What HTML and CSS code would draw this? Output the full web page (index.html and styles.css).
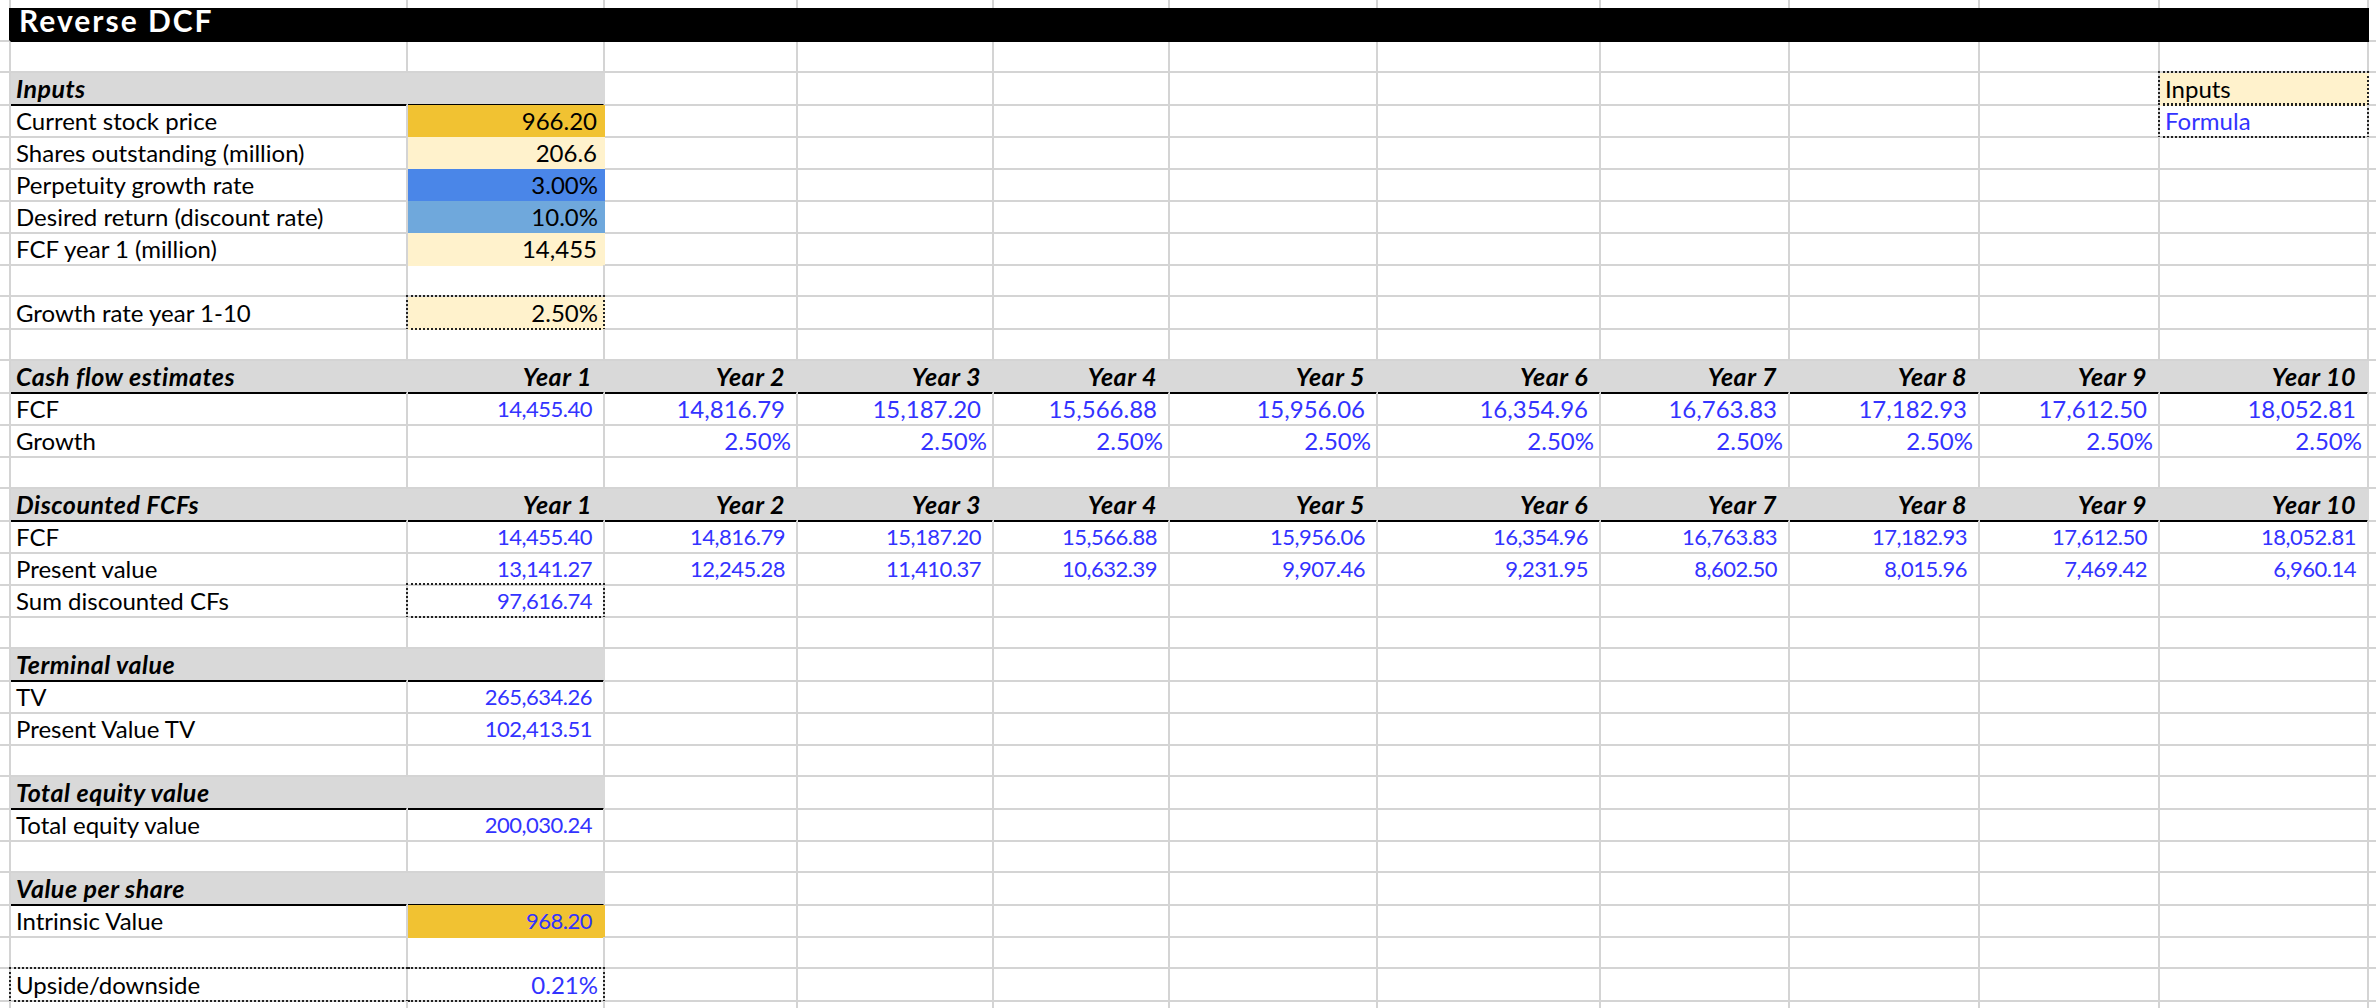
FILE: index.html
```html
<!DOCTYPE html>
<html lang="en">
<head>
<meta charset="utf-8">
<title>Reverse DCF</title>
<link rel="stylesheet" href="styles.css">
</head>
<body>
<div class="sheet">
  <div class="row r0"><span></span><span></span><span></span><span></span><span></span><span></span><span></span><span></span><span></span><span></span><span></span><span></span><span></span></div>
  <div class="row rt"><span class="s"></span><span class="title">Reverse DCF</span><span></span></div>
  <div class="row r2"><span></span><span></span><span></span><span></span><span></span><span></span><span></span><span></span><span></span><span></span><span></span><span></span><span></span></div>

  <div class="row"><span></span><span class="hd hi">Inputs</span><span class="hd"></span><span></span><span></span><span></span><span></span><span></span><span></span><span></span><span></span><span class="ly dot">Inputs</span><span></span></div>
  <div class="row"><span></span><span>Current stock price</span><span class="or v">966.20</span><span></span><span></span><span></span><span></span><span></span><span></span><span></span><span></span><span class="dot b">Formula</span><span></span></div>
  <div class="row"><span></span><span>Shares outstanding (million)</span><span class="ly v">206.6</span><span></span><span></span><span></span><span></span><span></span><span></span><span></span><span></span><span></span><span></span></div>
  <div class="row"><span></span><span>Perpetuity growth rate</span><span class="bl1 p">3.00%</span><span></span><span></span><span></span><span></span><span></span><span></span><span></span><span></span><span></span><span></span></div>
  <div class="row"><span></span><span>Desired return (discount rate)</span><span class="bl2 p">10.0%</span><span></span><span></span><span></span><span></span><span></span><span></span><span></span><span></span><span></span><span></span></div>
  <div class="row"><span></span><span>FCF year 1 (million)</span><span class="ly v">14,455</span><span></span><span></span><span></span><span></span><span></span><span></span><span></span><span></span><span></span><span></span></div>
  <div class="row"><span></span><span></span><span></span><span></span><span></span><span></span><span></span><span></span><span></span><span></span><span></span><span></span><span></span></div>
  <div class="row"><span></span><span>Growth rate year 1-10</span><span class="ly dot p">2.50%</span><span></span><span></span><span></span><span></span><span></span><span></span><span></span><span></span><span></span><span></span></div>
  <div class="row"><span></span><span></span><span></span><span></span><span></span><span></span><span></span><span></span><span></span><span></span><span></span><span></span><span></span></div>

  <div class="row"><span></span><span class="hd hi">Cash flow estimates</span><span class="hd hi n">Year 1</span><span class="hd hi n">Year 2</span><span class="hd hi n">Year 3</span><span class="hd hi n">Year 4</span><span class="hd hi n">Year 5</span><span class="hd hi n">Year 6</span><span class="hd hi n">Year 7</span><span class="hd hi n">Year 8</span><span class="hd hi n">Year 9</span><span class="hd hi n">Year 10</span><span></span></div>
  <div class="row"><span></span><span>FCF</span><span class="n b">14,455.40</span><span class="n b w">14,816.79</span><span class="n b w">15,187.20</span><span class="n b w">15,566.88</span><span class="n b w">15,956.06</span><span class="n b w">16,354.96</span><span class="n b w">16,763.83</span><span class="n b w">17,182.93</span><span class="n b w">17,612.50</span><span class="n b w">18,052.81</span><span></span></div>
  <div class="row"><span></span><span>Growth</span><span></span><span class="p b">2.50%</span><span class="p b">2.50%</span><span class="p b">2.50%</span><span class="p b">2.50%</span><span class="p b">2.50%</span><span class="p b">2.50%</span><span class="p b">2.50%</span><span class="p b">2.50%</span><span class="p b">2.50%</span><span></span></div>
  <div class="row"><span></span><span></span><span></span><span></span><span></span><span></span><span></span><span></span><span></span><span></span><span></span><span></span><span></span></div>

  <div class="row"><span></span><span class="hd hi">Discounted FCFs</span><span class="hd hi n">Year 1</span><span class="hd hi n">Year 2</span><span class="hd hi n">Year 3</span><span class="hd hi n">Year 4</span><span class="hd hi n">Year 5</span><span class="hd hi n">Year 6</span><span class="hd hi n">Year 7</span><span class="hd hi n">Year 8</span><span class="hd hi n">Year 9</span><span class="hd hi n">Year 10</span><span></span></div>
  <div class="row"><span></span><span>FCF</span><span class="n b">14,455.40</span><span class="n b">14,816.79</span><span class="n b">15,187.20</span><span class="n b">15,566.88</span><span class="n b">15,956.06</span><span class="n b">16,354.96</span><span class="n b">16,763.83</span><span class="n b">17,182.93</span><span class="n b">17,612.50</span><span class="n b">18,052.81</span><span></span></div>
  <div class="row"><span></span><span>Present value</span><span class="n b">13,141.27</span><span class="n b">12,245.28</span><span class="n b">11,410.37</span><span class="n b">10,632.39</span><span class="n b">9,907.46</span><span class="n b">9,231.95</span><span class="n b">8,602.50</span><span class="n b">8,015.96</span><span class="n b">7,469.42</span><span class="n b">6,960.14</span><span></span></div>
  <div class="row"><span></span><span>Sum discounted CFs</span><span class="n b dot">97,616.74</span><span></span><span></span><span></span><span></span><span></span><span></span><span></span><span></span><span></span><span></span></div>
  <div class="row"><span></span><span></span><span></span><span></span><span></span><span></span><span></span><span></span><span></span><span></span><span></span><span></span><span></span></div>

  <div class="row"><span></span><span class="hd hi">Terminal value</span><span class="hd"></span><span></span><span></span><span></span><span></span><span></span><span></span><span></span><span></span><span></span><span></span></div>
  <div class="row"><span></span><span>TV</span><span class="n b">265,634.26</span><span></span><span></span><span></span><span></span><span></span><span></span><span></span><span></span><span></span><span></span></div>
  <div class="row"><span></span><span>Present Value TV</span><span class="n b">102,413.51</span><span></span><span></span><span></span><span></span><span></span><span></span><span></span><span></span><span></span><span></span></div>
  <div class="row"><span></span><span></span><span></span><span></span><span></span><span></span><span></span><span></span><span></span><span></span><span></span><span></span><span></span></div>

  <div class="row"><span></span><span class="hd hi">Total equity value</span><span class="hd"></span><span></span><span></span><span></span><span></span><span></span><span></span><span></span><span></span><span></span><span></span></div>
  <div class="row"><span></span><span>Total equity value</span><span class="n b">200,030.24</span><span></span><span></span><span></span><span></span><span></span><span></span><span></span><span></span><span></span><span></span></div>
  <div class="row"><span></span><span></span><span></span><span></span><span></span><span></span><span></span><span></span><span></span><span></span><span></span><span></span><span></span></div>

  <div class="row"><span></span><span class="hd hi">Value per share</span><span class="hd"></span><span></span><span></span><span></span><span></span><span></span><span></span><span></span><span></span><span></span><span></span></div>
  <div class="row"><span></span><span>Intrinsic Value</span><span class="or n b">968.20</span><span></span><span></span><span></span><span></span><span></span><span></span><span></span><span></span><span></span><span></span></div>
  <div class="row"><span></span><span></span><span></span><span></span><span></span><span></span><span></span><span></span><span></span><span></span><span></span><span></span><span></span></div>
  <div class="row"><span></span><span class="dotl">Upside/downside</span><span class="p b dotr">0.21%</span><span></span><span></span><span></span><span></span><span></span><span></span><span></span><span></span><span></span><span></span></div>
  <div class="row"><span></span><span></span><span></span><span></span><span></span><span></span><span></span><span></span><span></span><span></span><span></span><span></span><span></span></div>
</div>
</body>
</html>
```
FILE: styles.css
```css
* { box-sizing: border-box; margin: 0; padding: 0; }
html, body { background: #fff; }
body {
  font-family: Lato, "Liberation Sans", sans-serif;
  font-size: 24px;
  color: #000;
  width: 2376px;
  height: 1008px;
  overflow: hidden;
}
.sheet { display: flex; flex-direction: column; }
.row {
  display: grid;
  grid-template-columns: 11px 397px 197px 193px 196px 176px 208px 223px 189px 190px 180px 209px 7px;
  height: 32px;
  flex: none;
}
.row > span {
  position: relative;
  border-right: 2px solid #d4d4d4;
  border-bottom: 2px solid #d4d4d4;
  line-height: 31px;
  white-space: nowrap;
  padding-left: 5px;
}
.row > span:last-child { border-right: none; }
.r0 { height: 8px; }
.r0 > span { border-bottom: none; }
.rt { height: 34px; }
.r2 { height: 31px; }

.rt > .s { border-right-color: #000; }
.row > .title {
  grid-column: span 11;
  background: #000;
  border-color: #000;
  color: #fff;
  font-weight: 700;
  font-size: 30px;
  letter-spacing: 2px;
  line-height: 24px;
  padding-left: 8px;
}

.row > .n { text-align: right; padding-right: 11px; }
.row > .p { text-align: right; padding-right: 5px; }
.row > .v { text-align: right; padding-right: 6px; }
.b { color: #3333ff; }
.row > .n.b { font-size: 22px; letter-spacing: -0.5px; }
.row > .n.b.w { font-size: 24px; letter-spacing: 0; }

.row > .hd {
  background: #d9d9d9;
  border-right-color: #d9d9d9;
  border-bottom: 2px solid #000;
}
.hi { font-weight: 700; font-style: italic; font-size: 25px; letter-spacing: 0.5px; }

.row > .or { background: #f1c232; border-color: #f1c232; }
.row > .ly { background: #fff2cc; border-color: #fff2cc; }
.row > .bl1 { background: #4a86e8; border-color: #4a86e8; }
.row > .bl2 { background: #6fa8dc; border-color: #6fa8dc; }

.dot::after, .dotl::after, .dotr::after {
  content: "";
  position: absolute;
  top: -2px; left: -2px; right: -2px; bottom: -2px;
  border: 2px dotted #222;
  pointer-events: none;
}
.dotl::after { border-right: none; }
.dotr::after { left: 0; border-left: none; }
```
